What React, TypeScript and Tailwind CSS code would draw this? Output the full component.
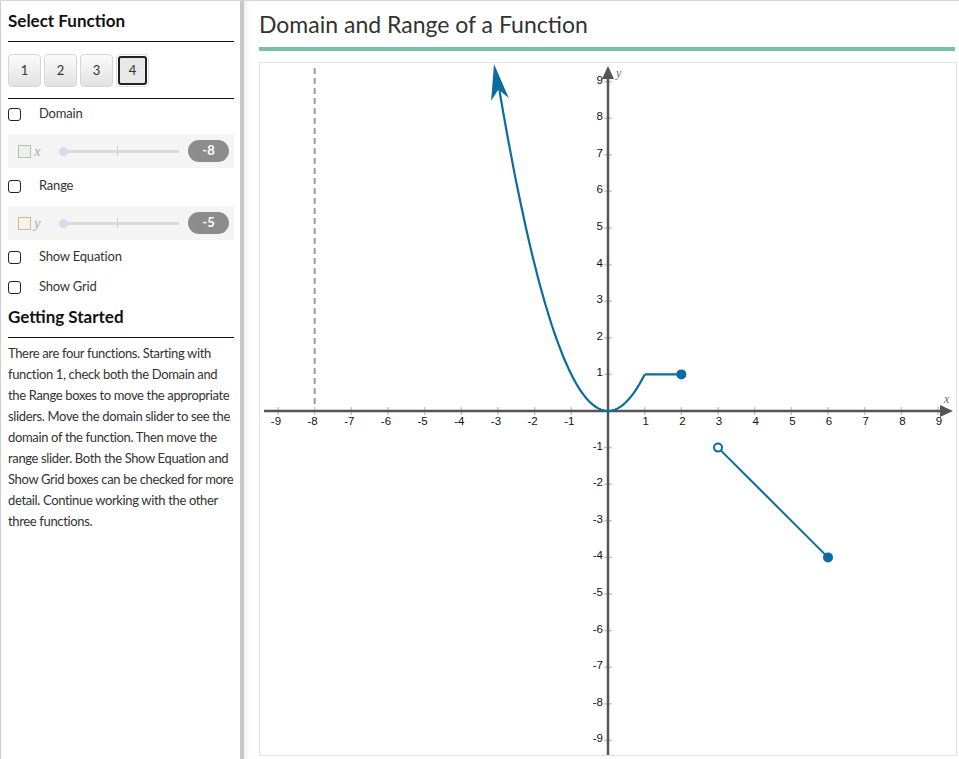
import React from "react";

const W = 696;
const H = 692;
const OX = 348;
const OY = 348;
const UX = 36.67;
const UY = 36.6;
const BLUE = "#0b6c9d";

const px = (x: number) => OX + x * UX;
const py = (y: number) => OY - y * UY;

// arrow at the top of the parabola
const tip = { x: 234, y: 1 };
const tan = (() => {
  const dx = -UX;
  const dy = -6 * UY;
  const l = Math.hypot(dx, dy);
  return { x: dx / l, y: dy / l };
})();
const nrm = { x: -tan.y, y: tan.x };
const AL = 36;
const AW = 9;
const back = (k: number, s: number) => ({
  x: tip.x - k * AL * tan.x + s * AW * nrm.x,
  y: tip.y - k * AL * tan.y + s * AW * nrm.y,
});
const arrowPts = [tip, back(1, 1), back(0.72, 0), back(1, -1)]
  .map((p) => `${p.x.toFixed(1)},${p.y.toFixed(1)}`)
  .join(" ");

const notch = back(0.72, 0);
const parabola = (() => {
  const startX = (notch.x - OX) / UX;
  const pts: string[] = [];
  const n = 60;
  for (let i = 0; i <= n; i++) {
    const x = startX + ((1 - startX) * i) / n;
    pts.push(`${px(x).toFixed(1)},${py(x * x).toFixed(1)}`);
  }
  return "M" + pts.join(" L");
})();

const ticks = [-9, -8, -7, -6, -5, -4, -3, -2, -1, 1, 2, 3, 4, 5, 6, 7, 8, 9];

function Graph() {
  return (
    <svg width={W} height={H} viewBox={`0 0 ${W} ${H}`} className="block">
      {/* dashed domain marker */}
      <line x1={px(-8)} y1={5} x2={px(-8)} y2={OY - 3} stroke="#9a9a9a" strokeWidth={2} strokeDasharray="6 4" />

      {/* ticks */}
      {ticks.map((t) => (
        <line key={"tx" + t} x1={px(t)} y1={OY - 4} x2={px(t)} y2={OY + 4} stroke="#c8c8c8" strokeWidth={1.5} />
      ))}
      {ticks.map((t) => (
        <line key={"ty" + t} x1={OX - 4} y1={py(t)} x2={OX + 4} y2={py(t)} stroke="#c8c8c8" strokeWidth={1.5} />
      ))}

      {/* axes */}
      <line x1={4} y1={OY} x2={683} y2={OY} stroke="#555" strokeWidth={2.5} />
      <polygon points={`${W - 3},${OY} ${W - 16},${OY - 6} ${W - 16},${OY + 6}`} fill="#555" />
      <line x1={OX} y1={H} x2={OX} y2={14} stroke="#555" strokeWidth={2.5} />
      <polygon points={`${OX},${3} ${OX - 6},${16} ${OX + 6},${16}`} fill="#555" />

      {/* labels */}
      <g fontFamily="'Liberation Sans', Arial, sans-serif" fontSize={11.5} fill="#111">
        {ticks.map((t) => (
          <text key={"lx" + t} x={px(t) + (t < 0 ? -2 : 1)} y={OY + 14} textAnchor="middle">
            {t}
          </text>
        ))}
        {ticks.map((t) => (
          <text key={"ly" + t} x={OX - 5} y={py(t) + 2} textAnchor="end">
            {t}
          </text>
        ))}
      </g>
      <text x={684} y={340} fontFamily="'Liberation Serif', serif" fontStyle="italic" fontSize={12} fill="#5a6a8a">
        x
      </text>
      <text x={356} y={14} fontFamily="'Liberation Serif', serif" fontStyle="italic" fontSize={12} fill="#5a6a8a">
        y
      </text>

      {/* function 4 */}
      <path d={parabola} fill="none" stroke={BLUE} strokeWidth={2.2} />
      <polygon points={arrowPts} fill={BLUE} />
      <line x1={px(1)} y1={py(1)} x2={px(2)} y2={py(1)} stroke={BLUE} strokeWidth={2.2} />
      <circle cx={px(2)} cy={py(1)} r={5} fill={BLUE} />
      <line x1={px(3)} y1={py(-1)} x2={px(6)} y2={py(-4)} stroke={BLUE} strokeWidth={2} />
      <circle cx={px(3)} cy={py(-1)} r={4} fill="#fff" stroke={BLUE} strokeWidth={2} />
      <circle cx={px(6)} cy={py(-4)} r={5} fill={BLUE} />
    </svg>
  );
}

function Check({ label }: { label: string }) {
  return (
    <div className="flex items-center gap-[18px] h-[20px]">
      <span className="w-[13px] h-[13px] border border-[#222] rounded-[3px] bg-white" />
      <span className="text-[13px] text-[#333] tracking-[-0.2px]">{label}</span>
    </div>
  );
}

function Slider({ v, swatch, value }: { v: string; swatch: string; value: string }) {
  return (
    <div className="flex items-center h-[34px] bg-[#f4f4f4] pl-[10px] pr-[5px]">
      <span className={`w-[13px] h-[13px] border border-[#bbb] ${swatch}`} />
      <span className="ml-[3px] w-[12px] text-[15px] italic text-[#aaa] leading-none" style={{ fontFamily: "'Liberation Serif', serif" }}>
        {v}
      </span>
      <div className="relative ml-[13px] w-[120px] h-[10px] flex items-center">
        <div className="absolute left-[5px] right-0 h-[3px] bg-[#dadada]" />
        <div className="absolute left-[58px] top-0 w-[1px] h-[10px] bg-[#cfcfcf]" />
        <div className="absolute left-0 w-[9px] h-[9px] rounded-full bg-[#d9dbea]" />
      </div>
      <span className="ml-auto w-[41px] h-[22px] rounded-full bg-[#8c8c8c] text-white text-[13px] font-bold flex items-center justify-center">
        {value}
      </span>
    </div>
  );
}

export default function App() {
  return (
    <div className="flex h-[759px] w-[959px] border-t border-[#d4d4d4] bg-white overflow-hidden" style={{ fontFamily: "Lato, 'Open Sans', sans-serif" }}>
      <aside className="w-[240px] shrink-0 border-l border-[#cfcfcf] pl-[7px] pr-[6px]">
        <h2 className="text-[17px] font-bold text-[#111] pt-[9px] pb-[9px] leading-[22px]">Select Function</h2>
        <div className="h-[1px] bg-[#111]" />
        <div className="flex gap-[3px] pt-[12px] pb-[11px]">
          {[1, 2, 3].map((n) => (
            <button key={n} className="w-[33px] h-[33px] rounded-[4px] border border-[#d6d6d6] bg-linear-to-b from-[#fbfbfb] to-[#e2e2e2] text-[13px] text-[#333]">
              {n}
            </button>
          ))}
          <button className="w-[33px] h-[33px] rounded-[4px] border border-[#ddd] bg-white p-[1px]">
            <span className="flex w-full h-full items-center justify-center rounded-[3px] border-2 border-[#222] bg-[#e8e8e8] text-[13px] text-[#333]">4</span>
          </button>
        </div>
        <div className="h-[1px] bg-[#111]" />
        <div className="pt-[5px] flex flex-col">
          <Check label="Domain" />
          <div className="mt-[10px]">
            <Slider v="x" swatch="bg-[#e7f3e4]" value="-8" />
          </div>
          <div className="mt-[8px]">
            <Check label="Range" />
          </div>
          <div className="mt-[10px]">
            <Slider v="y" swatch="bg-[#fdf2da]" value="-5" />
          </div>
          <div className="mt-[7px]">
            <Check label="Show Equation" />
          </div>
          <div className="mt-[10px]">
            <Check label="Show Grid" />
          </div>
        </div>
        <h2 className="text-[17px] font-bold text-[#111] pt-[9px] pb-[9px] leading-[22px]">Getting Started</h2>
        <div className="h-[1px] bg-[#111]" />
        <p className="pt-[5px] text-[13px] leading-[21px] text-[#333] tracking-[-0.35px]">
          There are four functions. Starting with function 1, check both the Domain and the Range boxes to move the appropriate sliders. Move the domain slider to see the domain of the function. Then move the range slider. Both the Show Equation and Show Grid boxes can be checked for more detail. Continue working with the other three functions.
        </p>
      </aside>
      <div className="w-[4px] shrink-0 bg-[#c8c8c8]" />
      <main className="flex-1 pl-[15px] pr-[2px] border-r border-[#d4d4d4] shadow-[inset_6px_0_6px_-4px_rgba(0,0,0,0.08)]">
        <h1 className="pt-[8px] text-[23px] leading-[30px] text-[#333]">Domain and Range of a Function</h1>
        <div className="mt-[8px] h-[4px] bg-[#76c2a7] mr-[2px]" />
        <div className="mt-[11px] w-[698px] border border-[#e6e6e6]">
          <Graph />
        </div>
      </main>
    </div>
  );
}
